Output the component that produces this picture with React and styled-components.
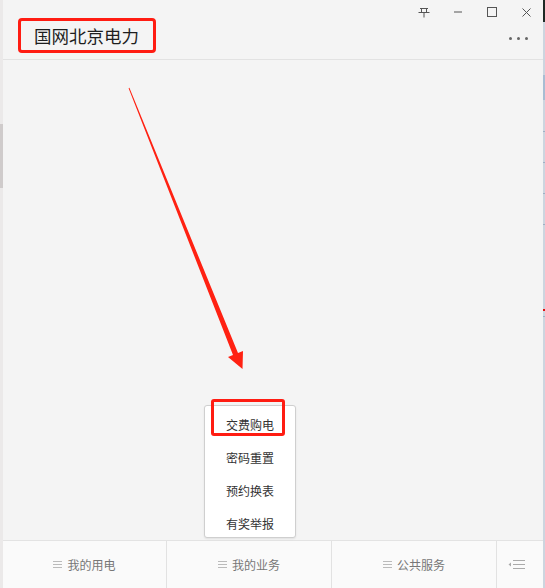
import React from 'react';
import styled, { createGlobalStyle } from 'styled-components';

const GlobalStyle = createGlobalStyle`
  html, body {
    margin: 0;
    padding: 0;
    background: #f4f4f4;
  }
  *, *::before, *::after { box-sizing: border-box; }
  body {
    font-family: "Noto Sans CJK SC", "Noto Sans", sans-serif;
  }
`;

const Page = styled.div`
  position: relative;
  display: flex;
  width: 545px;
  height: 588px;
  overflow: hidden;
`;

const LeftEdge = styled.div`
  width: 3px;
  display: flex;
  flex-direction: column;
  background: #ebe9e9;
  div { margin-top: 124px; height: 64px; background: #cfcbcb; }
`;

const RightEdge = styled.div`
  width: 2px;
  display: flex;
  flex-direction: column;
  background: #cdd5df;
`;

const EdgePart = styled.div`
  height: ${p => p.h}px;
  background: ${p => p.c};
`;

const Window = styled.div`
  flex: 1;
  display: flex;
  flex-direction: column;
  background: #f4f4f4;
`;

const Header = styled.header`
  height: 60px;
  display: flex;
  justify-content: space-between;
  align-items: flex-start;
  border-bottom: 1px solid #e2e2e2;
`;

const TitleBox = styled.div`
  margin: 18px 0 0 15px;
  width: 138px;
  height: 35px;
  display: flex;
  align-items: center;
  padding-left: 13px;
  border: 3px solid #ff1c12;
  border-radius: 4px;
  font-size: 17.5px;
  color: #1e1e1e;
  white-space: nowrap;
`;

const RightTools = styled.div`
  display: flex;
  flex-direction: column;
  align-items: flex-end;
`;

const Controls = styled.div`
  display: flex;
  height: 24px;
`;

const CtrlBtn = styled.div`
  width: 34px;
  height: 24px;
  display: flex;
  align-items: center;
  justify-content: center;
  color: #555;
`;

const Dots = styled.div`
  display: flex;
  gap: 5px;
  margin: 13px 15px 0 0;
  span {
    width: 3px;
    height: 3px;
    border-radius: 50%;
    background: #666;
  }
`;

const Content = styled.main`
  position: relative;
  flex: 1;
`;

const Menu = styled.ul`
  position: absolute;
  left: 201px;
  bottom: 2px;
  width: 92px;
  height: 133px;
  margin: 0;
  padding: 2px 0 0;
  list-style: none;
  background: #fff;
  border: 1px solid #cfcfcf;
  border-radius: 3px;
  box-shadow: 0 1px 2px rgba(0, 0, 0, 0.08);
`;

const MenuItem = styled.li`
  position: relative;
  height: 33px;
  display: flex;
  align-items: center;
  justify-content: center;
  font-size: 12px;
  color: #333;
  ${p => p.marked && `
    &::after {
      content: "";
      position: absolute;
      left: 6px;
      top: -9px;
      width: 74px;
      height: 37px;
      border: 3px solid #ff1c12;
      border-radius: 3px;
    }
  `}
`;

const Footer = styled.footer`
  height: 48px;
  display: grid;
  grid-template-columns: 164px 165px 165px 1fr;
  background: #fafafa;
  border-top: 1px solid #e3e3e3;
`;

const Tab = styled.div`
  display: flex;
  align-items: center;
  justify-content: center;
  gap: 5px;
  font-size: 12px;
  color: #777;
  border-right: ${p => (p.last ? 'none' : '1px solid #e2e2e2')};
  padding-right: ${p => (p.last ? '6px' : '0')};
`;

const Arrow = styled.svg`
  position: absolute;
  left: 0;
  top: 0;
  pointer-events: none;
`;

const Lines = ({ w = 9 }) => (
  <svg width={w} height="9" viewBox={`0 0 ${w} 9`}>
    <path d={`M0 1.5H${w}M0 4.5H${w}M0 7.5H${w}`} stroke="#bbb" strokeWidth="1" />
  </svg>
);

const tabs = ['我的用电', '我的业务', '公共服务'];
const menu = ['交费购电', '密码重置', '预约换表', '有奖举报'];

export default function App() {
  return (
    <>
      <GlobalStyle />
      <Page>
        <LeftEdge><div /></LeftEdge>
        <Window>
          <Header>
            <TitleBox>国网北京电力</TitleBox>
            <RightTools>
              <Controls>
                <CtrlBtn>
                  <svg width="12" height="11" viewBox="0 0 12 11">
                    <path d="M2 1.5H10M3.5 1.5V5.5M8.5 1.5V5.5M0.5 5.5H11.5M6 5.5V10.5" stroke="#555" strokeWidth="1" fill="none" />
                  </svg>
                </CtrlBtn>
                <CtrlBtn>
                  <svg width="9" height="2" viewBox="0 0 9 2">
                    <path d="M0 1H8" stroke="#555" strokeWidth="1" />
                  </svg>
                </CtrlBtn>
                <CtrlBtn>
                  <svg width="10" height="10" viewBox="0 0 10 10">
                    <rect x="0.5" y="0.5" width="9" height="9" stroke="#555" fill="none" />
                  </svg>
                </CtrlBtn>
                <CtrlBtn>
                  <svg width="9" height="9" viewBox="0 0 9 9">
                    <path d="M0.5 0.5L8.5 8.5M8.5 0.5L0.5 8.5" stroke="#555" strokeWidth="1" />
                  </svg>
                </CtrlBtn>
              </Controls>
              <Dots><span /><span /><span /></Dots>
            </RightTools>
          </Header>
          <Content>
            <Menu>
              {menu.map((m, i) => (
                <MenuItem key={m} marked={i === 0}>{m}</MenuItem>
              ))}
            </Menu>
          </Content>
          <Footer>
            {tabs.map(t => (
              <Tab key={t}><Lines />{t}</Tab>
            ))}
            <Tab last>
              <svg width="18" height="11" viewBox="0 0 18 11">
                <path d="M3 3.5L0.5 5.5L3 7.5Z" fill="#aaa" />
                <path d="M5 1.5H17M5 5.5H17M5 9.5H17" stroke="#aaa" strokeWidth="1" />
              </svg>
            </Tab>
          </Footer>
        </Window>
        <RightEdge>
          <EdgePart h={22} c="#1e2a25" />
          <EdgePart h={53} c="#cdd5df" />
          <EdgePart h={25} c="#a8bdd3" />
          <EdgePart h={31} c="#cdd5df" />
          <EdgePart h={1} c="#9fb0c4" />
          <EdgePart h={30} c="#cdd5df" />
          <EdgePart h={1} c="#9fb0c4" />
          <EdgePart h={30} c="#cdd5df" />
          <EdgePart h={1} c="#9fb0c4" />
          <EdgePart h={30} c="#cdd5df" />
          <EdgePart h={1} c="#9fb0c4" />
          <EdgePart h={84} c="#cdd5df" />
          <EdgePart h={2} c="#e01010" />
          <EdgePart h={5} c="#cdd5df" />
          <EdgePart h={1} c="#9fb0c4" />
        </RightEdge>
        <Arrow width="545" height="588" viewBox="0 0 545 588">
          <path
            d="M128.6 88.2 L129.4 87.8 L238 353 L243 351 L242.5 369 L228 357 L233 355 Z"
            fill="#ff2112"
          />
        </Arrow>
      </Page>
    </>
  );
}
